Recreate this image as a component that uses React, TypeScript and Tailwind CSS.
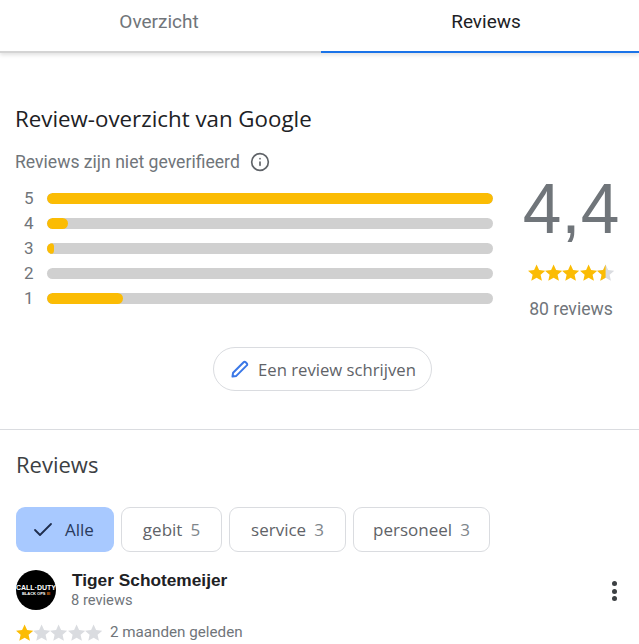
import React from 'react';
import { Check, Info } from 'lucide-react';

const BARS = [
  { label: '5', width: 446 },
  { label: '4', width: 21 },
  { label: '3', width: 7 },
  { label: '2', width: 0 },
  { label: '1', width: 76 },
];

const TOPICS = [
  { name: 'gebit', count: 5, width: 'w-[101px]' },
  { name: 'service', count: 3, width: 'w-[117px]' },
  { name: 'personeel', count: 3, width: 'w-[137px]' },
];

const Star = ({ fill = '#fbbc04', half = false, size = 17.2 }: { fill?: string; half?: boolean; size?: number }) => {
  const d = 'M12 1.6l3.2 7.2 7.8.8-5.9 5.2 1.7 7.7L12 18.5l-6.8 4 1.7-7.7L1 9.6l7.8-.8z';
  return (
    <svg width={size} height={size} viewBox="1 1 22 22">
      <path d={d} fill={fill} />
      {half && <path d="M12 1.6v16.9l-6.8 4 1.7-7.7L1 9.6l7.8-.8z" fill="#fbbc04" />}
    </svg>
  );
};

const Pencil = () => (
  <svg width="18" height="18" viewBox="0 0 18 18" fill="none" stroke="#3b78e7" strokeWidth="2" strokeLinejoin="round">
    <path d="M1.5 16.5l.6-3.8L12.6 2.2a1.4 1.4 0 0 1 2 0l1.2 1.2a1.4 1.4 0 0 1 0 2L5.3 15.9z" />
  </svg>
);

export default function App() {
  return (
    <div className="w-[639px] h-[644px] overflow-hidden bg-white font-['Roboto',sans-serif]">
      <div className="flex h-[53px] border-b-2 border-[#d4d4d4] shadow-[0_2px_4px_rgba(0,0,0,0.12)]">
        <div className="w-[321px] pt-[11px] pr-[3px] text-center text-[19px] leading-[22px] text-[#70757a]">Overzicht</div>
        <div className="w-[318px] -mb-[2px] border-b-[2px] border-[#1a73e8] pt-[11px] pl-[12px] text-center text-[19px] leading-[22px] text-[#202124]">Reviews</div>
      </div>

      <div className="px-[15px] pt-[52px]">
        <h2 className="font-['Open_Sans',sans-serif] text-[22.3px] leading-[28px] text-[#202124] whitespace-nowrap">Review-overzicht van Google</h2>
        <div className="mt-[18px] flex items-center gap-[10px] text-[17.6px] leading-[22px] text-[#70757a]">
          <span>Reviews zijn niet geverifieerd</span>
          <Info size={20} className="text-[#5f6368]" />
        </div>

        <div className="mt-[16px] flex">
          <div className="flex w-[478px] flex-col gap-[7px]">
            {BARS.map((bar) => (
              <div key={bar.label} className="flex h-[18px] items-center">
                <span className="w-[32px] pl-[9px] text-[17px] leading-[18px] text-[#70757a]">{bar.label}</span>
                <div className="h-[11px] w-[446px] overflow-hidden rounded-full bg-[#d0d0d0]">
                  <div className="h-full rounded-full bg-[#fbbc04]" style={{ width: bar.width }} />
                </div>
              </div>
            ))}
          </div>
          <div className="ml-[32px] flex w-[92px] flex-col items-center">
            <div className="-mt-[14px] font-['Liberation_Sans',sans-serif] text-[69.5px] leading-[68px] text-[#70757a] whitespace-nowrap">4,4</div>
            <div className="mt-[21px] flex">
              <Star />
              <Star />
              <Star />
              <Star />
              <Star fill="#dadce0" half />
            </div>
            <div className="mt-[17px] whitespace-nowrap text-[17.6px] leading-[22px] text-[#70757a]">80 reviews</div>
          </div>
        </div>

        <div className="mt-[27px] flex justify-center">
          <div className="ml-[6px] flex h-[44px] w-[219px] items-center gap-[9px] rounded-full border border-[#dadce0] pl-[17px] font-['Open_Sans',sans-serif] text-[16.7px] text-[#5f6368] whitespace-nowrap">
            <Pencil />
            <span>Een review schrijven</span>
          </div>
        </div>
      </div>

      <div className="mt-[38px] border-t border-[#dadce0] px-[16px] pt-[20px]">
        <h3 className="font-['Open_Sans',sans-serif] text-[22px] leading-[28px] text-[#3c4043]">Reviews</h3>

        <div className="mt-[29px] flex gap-[7px] font-['Open_Sans',sans-serif] text-[17px]">
          <div className="flex h-[45px] w-[98px] items-center gap-[10px] rounded-[9px] bg-[#a8c9ff] pl-[15px]">
            <Check size={24} strokeWidth={1.8} className="text-[#1f2d4d]" />
            <span className="text-[#2a3a5c]">Alle</span>
          </div>
          {TOPICS.map((topic) => (
            <div key={topic.name} className={`flex h-[45px] ${topic.width} items-center justify-center gap-[8px] rounded-[9px] border border-[#dadce0] text-[#5f6368]`}>
              <span>{topic.name}</span>
              <span className="text-[#80868b]">{topic.count}</span>
            </div>
          ))}
        </div>

        <div className="mt-[18px] flex">
          <div className="flex h-[40px] w-[40px] shrink-0 flex-col items-center justify-center rounded-full bg-black font-['Liberation_Sans',sans-serif] text-white">
            <span className="text-[7px] font-bold leading-[7px] whitespace-nowrap">CALL·DUTY</span>
            <span className="text-[4px] font-bold leading-[5px] whitespace-nowrap">BLACK OPS <span className="text-[#e8791e]">III</span></span>
          </div>
          <div className="ml-[16px] flex-1">
            <div className="text-[17.3px] font-bold leading-[20px] text-[#202124] font-['Liberation_Sans',sans-serif]">Tiger Schotemeijer</div>
            <div className="-ml-[1px] text-[14.7px] leading-[20px] text-[#70757a]">8 reviews</div>
          </div>
          <div className="mr-[6px] mt-[11px] flex flex-col gap-[2.5px]">
            <span className="h-[5px] w-[5px] rounded-full bg-[#3c4043]" />
            <span className="h-[5px] w-[5px] rounded-full bg-[#3c4043]" />
            <span className="h-[5px] w-[5px] rounded-full bg-[#3c4043]" />
          </div>
        </div>

        <div className="mt-[12px] flex items-center">
          <Star />
          <Star fill="#dadce0" />
          <Star fill="#dadce0" />
          <Star fill="#dadce0" />
          <Star fill="#dadce0" />
          <span className="ml-[8px] text-[15.2px] leading-[20px] text-[#70757a]">2 maanden geleden</span>
        </div>
      </div>
    </div>
  );
}
